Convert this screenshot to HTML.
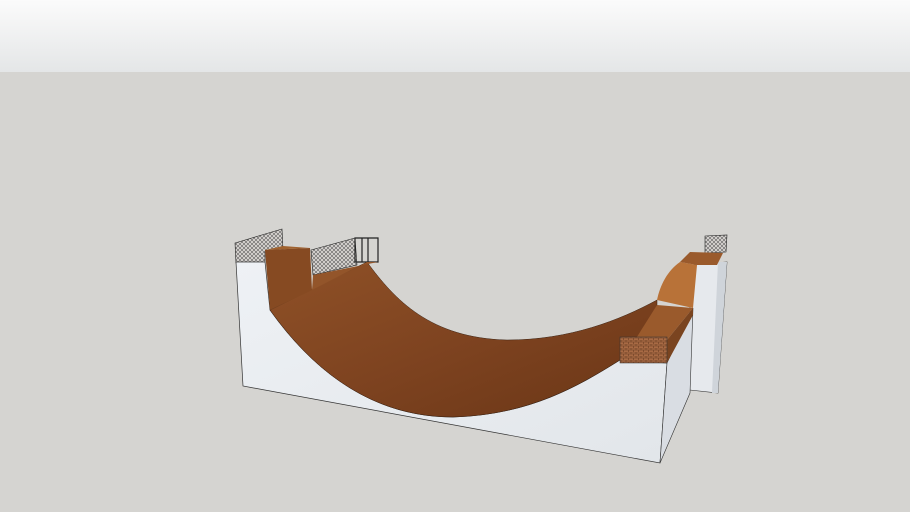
<!DOCTYPE html>
<html><head><meta charset="utf-8"><style>
html,body{margin:0;padding:0;width:910px;height:512px;overflow:hidden;background:#d5d4d1}
</style></head><body>
<svg width="910" height="512" viewBox="0 0 910 512" xmlns="http://www.w3.org/2000/svg">
<defs>
<linearGradient id="sky" x1="0" y1="0" x2="0" y2="1"><stop offset="0" stop-color="#fbfbfb"/><stop offset="1" stop-color="#e4e6e7"/></linearGradient>
<linearGradient id="wood" x1="0" y1="0" x2="1" y2="1"><stop offset="0" stop-color="#8f5127"/><stop offset="0.5" stop-color="#7e4320"/><stop offset="1" stop-color="#6a3616"/></linearGradient>
<linearGradient id="wall" x1="0" y1="0" x2="1" y2="1"><stop offset="0" stop-color="#eef1f5"/><stop offset="1" stop-color="#e2e6ea"/></linearGradient>
<pattern id="mesh" width="4" height="4" patternUnits="userSpaceOnUse"><rect width="4" height="4" fill="#d0cdca"/><path d="M0 0L4 4M4 0L0 4" stroke="#444" stroke-width="0.5"/></pattern>
<pattern id="brick" width="5" height="4" patternUnits="userSpaceOnUse"><rect width="5" height="4" fill="#a86a44"/><path d="M0 0H5M0 2H5M1 0V2M3.5 2V4" stroke="#6a3d22" stroke-width="0.6"/></pattern>
</defs>
<rect x="0" y="0" width="910" height="72" fill="url(#sky)"/>
<rect x="0" y="72" width="910" height="440" fill="#d5d4d1"/>
<path d="M690 265 L727 262 L718 393 L690 390 Z" fill="#e6e9ed" stroke="#333" stroke-width="0.6"/>
<path d="M718 262 L727 262 L718 393 L712 393 Z" fill="#cfd4da"/>
<path d="M235 243 L282 229 L283 250 L265 252 L265 263 L236 263 Z" fill="url(#mesh)" stroke="#222" stroke-width="0.6"/>
<path d="M311 250 L355 238 L357 265 L313 275 Z" fill="url(#mesh)" stroke="#222" stroke-width="0.6"/>
<path d="M355 238 L378 238 L378 262 L355 262 Z" fill="none" stroke="#222" stroke-width="1.2"/>
<path d="M362 238 V262 M368 238 V262" stroke="#222" stroke-width="1.2"/>
<path d="M705 236 L727 235 L726 252 L705 253 Z" fill="url(#mesh)" stroke="#222" stroke-width="0.6"/>
<path d="M236 262 L265 262 L270 310 C320 380 380 417 453 417 C530 415 580 385 620 360 L667 363 L660 463 L243 386 Z" fill="url(#wall)" stroke="#333" stroke-width="0.7"/>
<path d="M667 363 L693 308 L690 393 L660 463 Z" fill="#d9dde3" stroke="#333" stroke-width="0.6"/>
<path d="M270 310 L367 262 C395 300 430 338 507 340 C570 340 620 320 657 300 L657 330 L620 360 C580 385 530 415 453 417 C380 417 320 380 270 310 Z" fill="url(#wood)" stroke="#3a2010" stroke-width="0.5"/>
<path d="M265 250 L310 248 L312 290 L270 310 Z" fill="#864a22"/>
<path d="M265 250 L283 246 L310 248 Z" fill="#a0622f"/>
<path d="M312 290 L367 262 L378 262 L313 275 Z" fill="#93552a"/>
<path d="M657 300 C660 285 668 270 680 262 L697 265 L693 308 Z" fill="#b87238"/>
<path d="M680 262 L690 252 L723 253 L717 265 L697 265 Z" fill="#9a5a2c"/>
<path d="M635 340 L657 305 L693 308 L667 340 Z" fill="#9a5a2c"/>
<path d="M667 340 L693 308 L693 315 L667 363 Z" fill="#7a4420"/>
<rect x="620" y="337" width="47" height="26" fill="url(#brick)" stroke="#333" stroke-width="0.5"/>
</svg>
</body></html>
